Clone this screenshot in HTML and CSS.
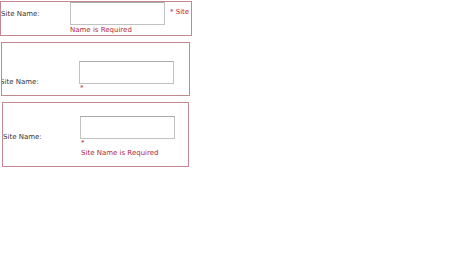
FILE: index.html
```html
<!DOCTYPE html>
<html>
<head>
  <title>Site Name Validation</title>
  <link rel="stylesheet" href="styles.css">
</head>
<body>
  <!-- error shown beside the field -->
  <div class="box box-side">
    <label class="label">Site Name:</label>
    <input class="field" type="text">
    <span class="error side">* Site</span>
    <span class="error under">Name is Required</span>
  </div>

  <!-- star only -->
  <div class="box box-star">
    <label class="label">Site Name:</label>
    <div class="col">
      <input class="field" type="text">
      <span class="error star">*</span>
    </div>
  </div>

  <!-- star plus message below -->
  <div class="box box-below">
    <label class="label">Site Name:</label>
    <div class="col">
      <input class="field" type="text">
      <span class="error star">*</span>
      <span class="error msg">Site Name is Required</span>
    </div>
  </div>
</body>
</html>
```

FILE: styles.css
```css
* {
  box-sizing: border-box;
}

body {
  margin: 0;
  background: #fff;
  font-family: 'DejaVu Sans', Verdana, sans-serif;
  font-size: 7px;
  color: #333;
}

.box {
  border: 1px solid #c48892;
  overflow: hidden;
}

.label {
  line-height: 8px;
  white-space: nowrap;
}

.field {
  display: block;
  width: 95px;
  height: 23px;
  margin: 0;
  padding: 0;
  border: 1px solid #c2c2c2;
  border-top-color: #aaa;
  background: #fff;
}

.error {
  color: #b3283a;
  line-height: 8px;
  white-space: nowrap;
}

/* box 1 */
.box-side {
  width: 192px;
  height: 35px;
  margin-top: 1px;
  display: grid;
  grid-template-columns: 69px 95px 1fr;
  grid-template-rows: 23px 8px;
  row-gap: 1px;
}

.box-side .label {
  align-self: center;
}

.box-side .side {
  padding-left: 5px;
  padding-top: 6px;
}

.box-side .under {
  grid-column: 2 / 4;
}

/* box 2 - label is pushed under the left border a bit */
.box-star {
  width: 189px;
  height: 54px;
  margin: 6px 0 0 1px;
  display: flex;
  align-items: flex-end;
  padding: 17px 0 5px 0;
}

.box-star .label {
  width: 77px;
  margin: 0 2px 4px -2px;
}

.col {
  display: flex;
  flex-direction: column;
}

.star {
  padding-left: 1px;
  height: 6px;
  line-height: 9px;
}

/* box 3 */
.box-below {
  width: 187px;
  height: 65px;
  margin: 6px 0 0 2px;
  display: flex;
  align-items: center;
  padding: 12px 0 9px 0;
}

.box-below .label {
  width: 77px;
  margin-top: 2px;
}

.box-below .msg {
  margin-top: 4px;
  padding-left: 1px;
}
```
